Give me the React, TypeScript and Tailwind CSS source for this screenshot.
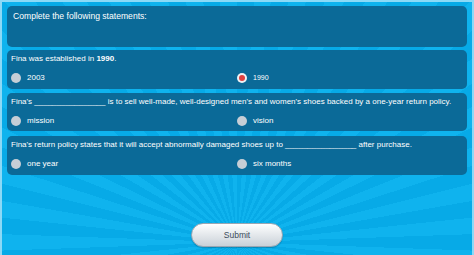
import React from "react";

type Option = { label: string; checked?: boolean };
type Question = { text: React.ReactNode; options: [Option, Option] };

const questions: Question[] = [
  {
    text: (
      <>
        Fina was established in <b>1990</b>.
      </>
    ),
    options: [{ label: "2003" }, { label: "1990", checked: true }],
  },
  {
    text: "Fina's ________________ is to sell well-made, well-designed men's and women's shoes backed by a one-year return policy.",
    options: [{ label: "mission" }, { label: "vision" }],
  },
  {
    text: "Fina's return policy states that it will accept abnormally damaged shoes up to ________________ after purchase.",
    options: [{ label: "one year" }, { label: "six months" }],
  },
];

function Radio({ checked }: { checked?: boolean }) {
  if (checked) {
    return (
      <span className="flex h-[10px] w-[10px] items-center justify-center rounded-full bg-[#eef2f5]">
        <span className="h-[6px] w-[6px] rounded-full bg-[#e0403f]" />
      </span>
    );
  }
  return <span className="h-[10px] w-[10px] rounded-full bg-[#c6ced6]" />;
}

export default function App() {
  return (
    <div
      className="flex h-[255px] w-[474px] flex-col overflow-hidden border-x-2 border-t-2 border-[#8cd9f6] bg-[#0aaeea] bg-[repeating-conic-gradient(from_0deg_at_50%_95%,#07aae7_0deg_4deg,#0fb3ee_4deg_8deg)] px-[5px] pt-[4px] text-white"
      style={{ fontFamily: '"Liberation Sans", Arial, sans-serif' }}
    >
      <div className="h-[41px] rounded-[5px] bg-[#0b6a98] px-[6px] pt-[5px] text-[8.6px] leading-[11px]">
        Complete the following statements:
      </div>
      {questions.map((q, i) => (
        <div
          key={i}
          className={`flex flex-col rounded-[5px] bg-[#0b6a98] px-[4px] pt-[4px] text-[8px] leading-[10px] ${
            i === 0 ? "mt-[3px] h-[39px]" : i === 1 ? "mt-[4px] h-[38px]" : "mt-[5px] h-[39px]"
          }`}
        >
          <div>{q.text}</div>
          <div className="mt-[9px] flex">
            {q.options.map((o, j) => (
              <div key={j} className="flex w-[228px] items-center gap-[6px] pl-0">
                <Radio checked={o.checked} />
                <span className={o.checked ? "text-[7px]" : ""}>{o.label}</span>
              </div>
            ))}
          </div>
        </div>
      ))}
      <div className="mt-[48px] flex justify-center">
        <button className="h-[24px] w-[92px] rounded-full border border-[#9aa6b2] bg-gradient-to-b from-[#ffffff] to-[#c9d1d8] text-[8.5px] text-[#3c4b5c] shadow-[0_1px_1px_rgba(0,0,0,0.2)]">
          Submit
        </button>
      </div>
    </div>
  );
}
